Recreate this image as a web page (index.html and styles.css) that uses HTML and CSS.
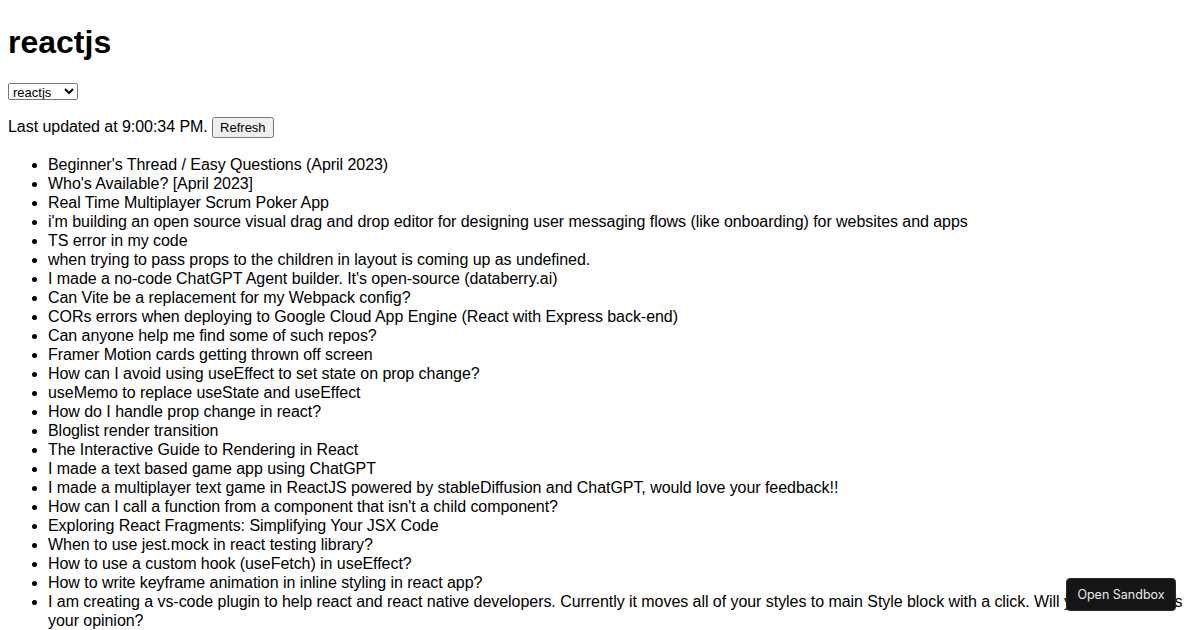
FILE: index.html
```html
<!DOCTYPE html>
<html>
<head>
<meta charset="utf-8">
<link rel="stylesheet" href="styles.css">
</head>
<body>
<div class="app">
  <h1 class="title">reactjs</h1>
  <select class="picker">
    <option>reactjs</option>
    <option>frontend</option>
  </select>
  <p class="status">Last updated at 9:00:34 PM. <button class="refresh">Refresh</button></p>
  <ul class="posts">
    <li>Beginner's Thread / Easy Questions (April 2023)</li>
    <li>Who's Available? [April 2023]</li>
    <li>Real Time Multiplayer Scrum Poker App</li>
    <li>i'm building an open source visual drag and drop editor for designing user messaging flows (like onboarding) for websites and apps</li>
    <li>TS error in my code</li>
    <li>when trying to pass props to the children in layout is coming up as undefined.</li>
    <li>I made a no-code ChatGPT Agent builder. It's open-source (databerry.ai)</li>
    <li>Can Vite be a replacement for my Webpack config?</li>
    <li>CORs errors when deploying to Google Cloud App Engine (React with Express back-end)</li>
    <li>Can anyone help me find some of such repos?</li>
    <li>Framer Motion cards getting thrown off screen</li>
    <li>How can I avoid using useEffect to set state on prop change?</li>
    <li>useMemo to replace useState and useEffect</li>
    <li>How do I handle prop change in react?</li>
    <li>Bloglist render transition</li>
    <li>The Interactive Guide to Rendering in React</li>
    <li>I made a text based game app using ChatGPT</li>
    <li>I made a multiplayer text game in ReactJS powered by stableDiffusion and ChatGPT, would love your feedback!!</li>
    <li>How can I call a function from a component that isn't a child component?</li>
    <li>Exploring React Fragments: Simplifying Your JSX Code</li>
    <li>When to use jest.mock in react testing library?</li>
    <li>How to use a custom hook (useFetch) in useEffect?</li>
    <li>How to write keyframe animation in inline styling in react app?</li>
    <li>I am creating a vs-code plugin to help react and react native developers. Currently it moves all of your styles to main Style block with a click. Will you guys give us your opinion?</li>
  </ul>
</div>
<button class="sandbox">Open Sandbox</button>
</body>
</html>
```

FILE: styles.css
```css
html, body {
  font-family: "Liberation Sans", Arial, sans-serif;
  color: #000;
  background: #fff;
}
body {
  margin: 8px;
  font-size: 16px;
  line-height: 19px;
  letter-spacing: -0.05px;
}
.title {
  font-size: 32px;
  line-height: 37px;
  margin: 16px 0 21px;
  letter-spacing: 0;
}
.picker {
  font-family: "Liberation Sans", Arial, sans-serif;
  font-size: 13px;
  height: 17px;
  padding: 0;
  letter-spacing: 0;
}
.status {
  margin: 16px 0;
}
.refresh {
  font-family: "Liberation Sans", Arial, sans-serif;
  font-size: 13px;
  line-height: 15px;
  letter-spacing: 0;
  padding: 1px 6px;
}
.posts {
  margin: 17px 0 16px;
  padding-left: 40px;
}
.sandbox {
  position: fixed;
  right: 24px;
  bottom: 19px;
  width: 110px;
  height: 33px;
  background: #151515;
  color: #ececec;
  border: 1px solid #2a2a2a;
  border-radius: 4px;
  font-family: Inter, "Liberation Sans", sans-serif;
  font-size: 12.5px;
  font-weight: 400;
  letter-spacing: 0;
  padding: 0;
}
```
